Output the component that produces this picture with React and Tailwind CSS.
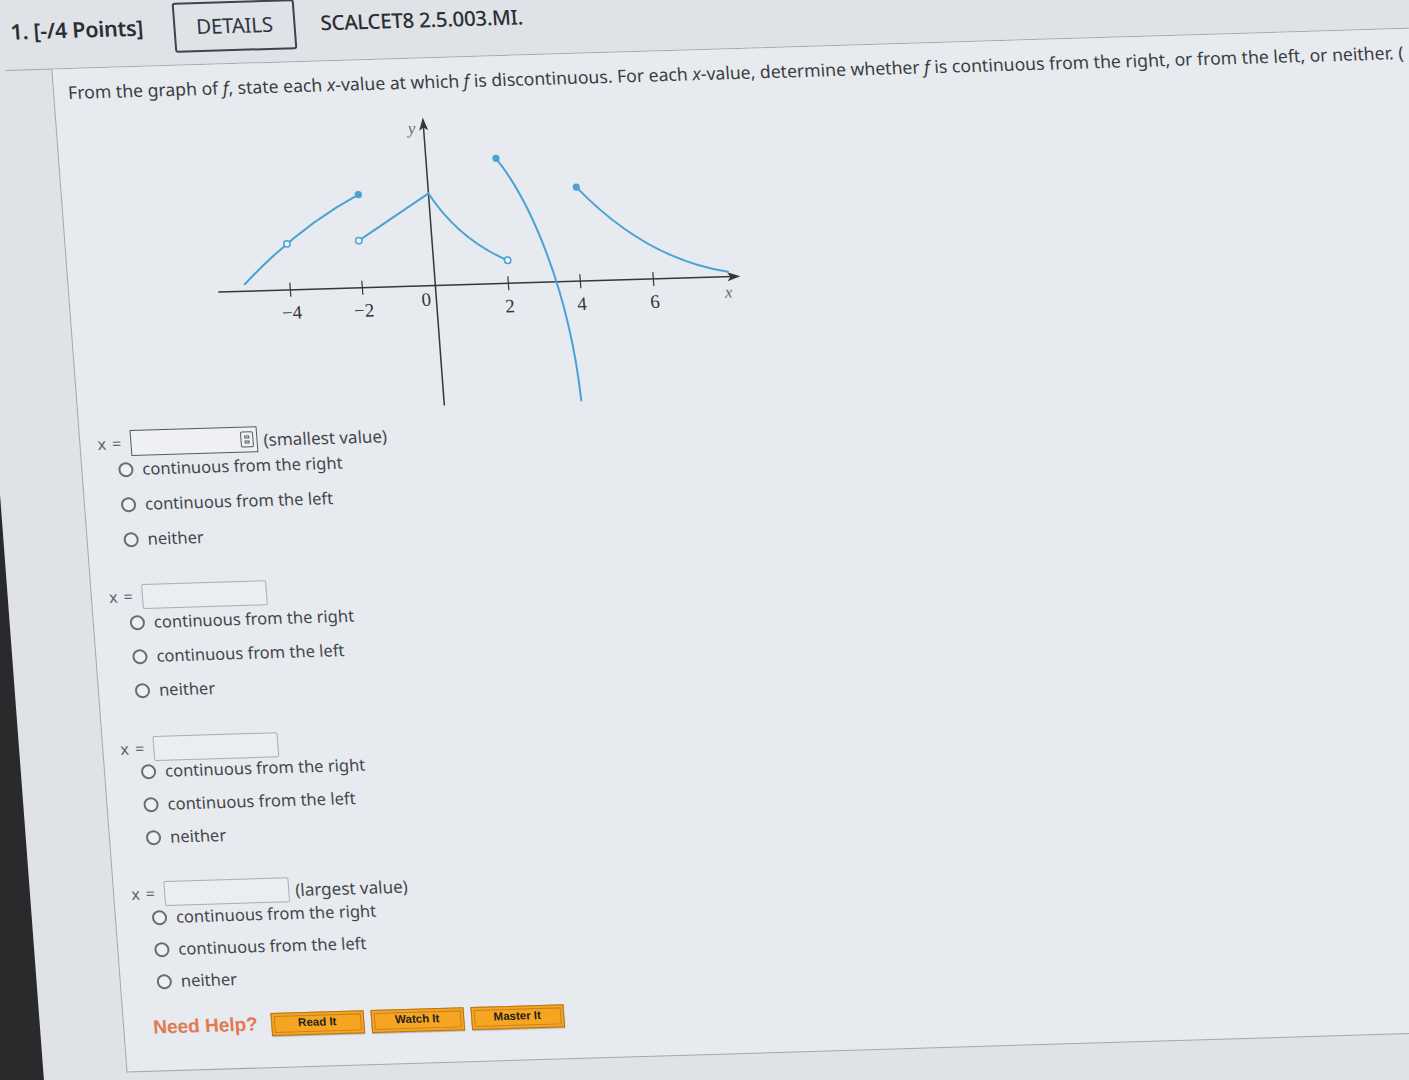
import React from "react";

const SANS = "font-['Noto_Sans','Open_Sans',sans-serif]";

function RadioRow({ label, h }) {
  return (
    <div className={`flex items-center pl-[36px] ${h}`}>
      <span className="w-[15px] h-[15px] rounded-full border-2 border-[#6a6d72] bg-[#eef0f3] shrink-0" />
      <span className="ml-[9px] text-[16.5px] text-[#43464b] leading-none">{label}</span>
    </div>
  );
}

function Group({ mt, rmt, rh, dark, note }) {
  return (
    <div className={mt}>
      <div className="flex items-center h-[26px] pl-[17px]">
        <span className="w-[33px] text-[16px] text-[#5f6267] leading-none tracking-[1px]">x =</span>
        {dark ? (
          <div className="w-[127px] h-[26px] border-[1.5px] border-[#55585d] bg-[#eef0f3] flex items-center justify-end pr-[3px]">
            <div className="w-[13px] h-[16px] border-[1.5px] border-[#55585d] rounded-[2px] flex flex-col items-center justify-center gap-[2px]">
              <span className="w-[5px] h-[3px] border border-[#55585d]" />
              <span className="w-[5px] h-[3px] border border-[#55585d]" />
            </div>
          </div>
        ) : (
          <div className="w-[125px] h-[25px] border border-[#a9adb3] rounded-[2px] bg-[#ebeef1]" />
        )}
        {note && <span className="ml-[6px] text-[17px] text-[#43464b] leading-none">{note}</span>}
      </div>
      <div className={rmt}>
        <RadioRow h={rh} label="continuous from the right" />
        <RadioRow h={rh} label="continuous from the left" />
        <RadioRow h={rh} label="neither" />
      </div>
    </div>
  );
}

function Graph() {
  const blue = "#4aa2d6";
  const ticks = [
    { x: 78, t: "\u22124" },
    { x: 150, t: "\u22122" },
    { x: 296, t: "2" },
    { x: 368, t: "4" },
    { x: 441, t: "6" },
  ];
  return (
    <svg width="540" height="295" viewBox="0 0 540 295" className="block">
      <line x1="6" y1="170" x2="520" y2="170" stroke="#35373a" strokeWidth="1.5" />
      <path d="M528,170 L515,165.5 L518,170 L515,174.5 Z" fill="#35373a" />
      <line x1="223" y1="10" x2="223" y2="290" stroke="#35373a" strokeWidth="1.5" />
      <path d="M223,2 L218.5,15 L223,12 L227.5,15 Z" fill="#35373a" />
      {ticks.map((k) => (
        <g key={k.t}>
          <line x1={k.x} y1="163" x2={k.x} y2="177" stroke="#35373a" strokeWidth="1.2" />
          <text x={k.x} y="199" textAnchor="middle" fontFamily="'Liberation Serif', serif" fontSize="19" fill="#34363a">
            {k.t}
          </text>
        </g>
      ))}
      <text x="213" y="190" textAnchor="middle" fontFamily="'Liberation Serif', serif" fontSize="19" fill="#34363a">0</text>
      <text x="515" y="191" textAnchor="middle" fontFamily="'Liberation Serif', serif" fontStyle="italic" fontSize="17" fill="#6a6c70">x</text>
      <text x="211" y="18" textAnchor="middle" fontFamily="'Liberation Serif', serif" fontStyle="italic" fontSize="17" fill="#6a6c70">y</text>
      <g fill="none" stroke={blue} strokeWidth="2" strokeLinecap="round">
        <path d="M33,163 Q90,108 153,77" />
        <path d="M150,123 L223,78 Q250,125 297,147" />
        <path d="M293,45 C325,90 356,180 360,289" />
        <path d="M371,76 Q435,150 516,165" />
      </g>
      <g fill={blue}>
        <circle cx="153" cy="77" r="3.6" />
        <circle cx="293" cy="45" r="3.6" />
        <circle cx="371" cy="76" r="3.6" />
      </g>
      <g fill="#f2f4f6" stroke={blue} strokeWidth="1.5">
        <circle cx="78" cy="124" r="3.2" />
        <circle cx="150" cy="123" r="3.2" />
        <circle cx="297" cy="147" r="3.2" />
      </g>
    </svg>
  );
}

function HelpButton({ label }) {
  return (
    <div className="w-[93px] h-[23px] border border-[#b8741c] bg-[#f5a51f] p-[2px] shadow-[0_1px_1px_rgba(0,0,0,0.25)]">
      <div className="w-full h-full border border-[#c5802a] flex items-center justify-center">
        <span className="font-['Liberation_Sans',Arial,sans-serif] font-bold text-[11.5px] text-[#1f1f1f] leading-none">{label}</span>
      </div>
    </div>
  );
}

export default function App() {
  return (
    <div className={`w-[1409px] h-[1080px] overflow-hidden bg-[#2a2a2c] ${SANS}`}>
      <div className="origin-top-left [transform:matrix(1,-0.03,0.075,1,-37,1)] w-[1560px] h-[1200px] bg-[#dfe2e6] pl-[37px]">
        <div className="h-[71px] border-b border-[#a3a7ad] flex items-center pb-[5px] pl-[8px]">
          <span className="w-[140px] text-[21.5px] font-semibold text-[#2b2e33] tracking-[-0.3px] whitespace-nowrap">1. [-/4 Points]</span>
          <div className="ml-[23px] w-[122px] h-[50px] border-2 border-[#3c4452] rounded-[3px] flex items-center justify-center">
            <span className="text-[20.5px] text-[#2f3540] tracking-[-0.3px]">DETAILS</span>
          </div>
          <span className="ml-[25px] text-[20.5px] font-medium text-[#2b2e33] tracking-[-0.3px] whitespace-nowrap">SCALCET8 2.5.003.MI.</span>
        </div>
        <div className="ml-[46px] border-l border-b border-[#a3a7ad] bg-[#e7eaee] pb-[28px]">
          <div className="pt-[11px] pl-[14px] h-[35px] whitespace-nowrap text-[17.6px] leading-[24px] text-[#3a3d42]">
            From the graph of <i>f</i>, state each <i>x</i>-value at which <i>f</i> is discontinuous. For each <i>x</i>-value, determine whether <i>f</i> is continuous from the right, or from the left, or neither. (
          </div>
          <div className="ml-[143px] mt-[22px]">
            <Graph />
          </div>
          <Group mt="mt-[10px]" rmt="-mt-[4px]" rh="h-[35px]" dark note="(smallest value)" />
          <Group mt="mt-[26px]" rmt="-mt-[4px]" rh="h-[34px]" />
          <Group mt="mt-[28px]" rmt="-mt-[6px]" rh="h-[33px]" />
          <Group mt="mt-[26px]" rmt="-mt-[5px]" rh="h-[32px]" note="(largest value)" />
          <div className="mt-[15px] h-[30px] pl-[29px] flex items-center">
            <span className="font-['Liberation_Sans',Arial,sans-serif] font-bold text-[19px] text-[#e07a50]">Need Help?</span>
            <div className="ml-[13px] flex gap-[7px]">
              <HelpButton label="Read It" />
              <HelpButton label="Watch It" />
              <HelpButton label="Master It" />
            </div>
          </div>
        </div>
      </div>
    </div>
  );
}
